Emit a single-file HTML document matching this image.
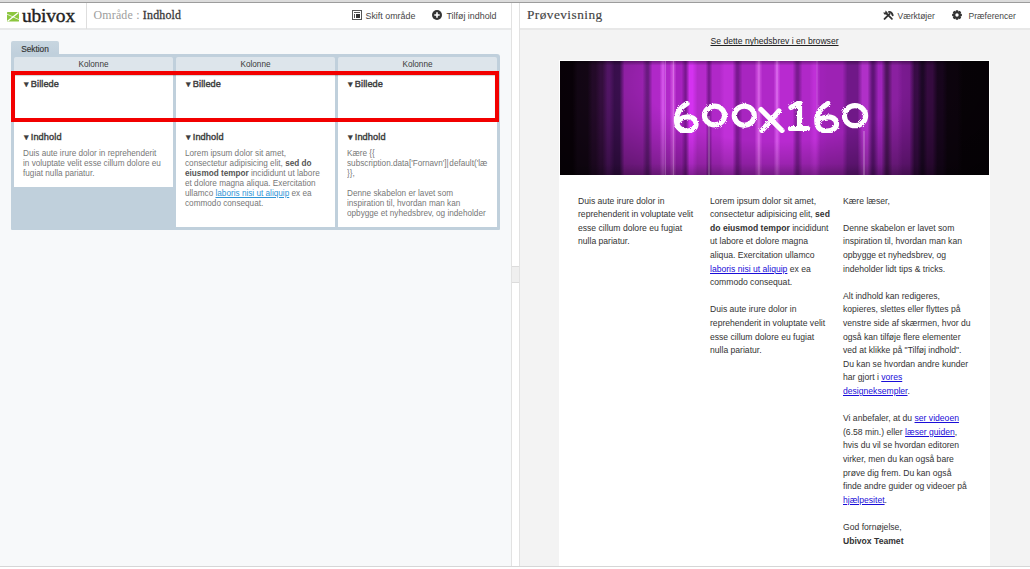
<!DOCTYPE html>
<html><head><meta charset="utf-8">
<style>
*{margin:0;padding:0;box-sizing:border-box}
html,body{width:1030px;height:569px;overflow:hidden;background:#fff;font-family:"Liberation Sans",sans-serif}
.abs{position:absolute}
.nw{white-space:nowrap}
#topline{left:0;top:0;width:1030px;height:3px;background:#dcdcdc;border-bottom:1px solid #9c9c9c}
#lhead{left:0;top:3px;width:511px;height:27px;background:#fff;border-bottom:2px solid #e8e9ea}
#lbody{left:0;top:30px;width:511px;height:536px;background:#f7f9fa}
#split{left:511px;top:3px;width:9px;height:563px;background:#fff;border-left:1px solid #e2e2e2;border-right:1px solid #e2e2e2}
#handle{left:512px;top:266px;width:7px;height:17px;background:#efefef;border-top:1px solid #dcdcdc;border-bottom:1px solid #dcdcdc}
#rhead{left:520px;top:3px;width:510px;height:27px;background:#fff;border-bottom:2px solid #e8e8e8}
#rbody{left:520px;top:30px;width:510px;height:536px;background:#f3f3f3}
#botline{left:0;top:566px;width:1030px;height:1px;background:#d6d6d6}
#botw{left:0;top:567px;width:1030px;height:2px;background:#fff}

.logo{left:22px;top:4px;font-family:"Liberation Serif",serif;font-size:19.5px;line-height:24px;color:#222;letter-spacing:-0.2px;-webkit-text-stroke:0.4px #222}
.vsep{left:86px;top:3px;width:1px;height:26px;background:#dedede}
.area{left:93.5px;top:8.3px;font-family:"Liberation Serif",serif;font-size:11.9px;letter-spacing:0.2px;line-height:14px;color:#9d9d9d}
.area b{color:#3a3a3a;font-weight:normal;-webkit-text-stroke:0.3px #3a3a3a}
.hbtn{font-size:8.7px;line-height:10px;color:#454545;top:10.6px}

#cont{left:11px;top:54px;width:489px;height:176px;background:#c0d0dc;border-radius:0 3px 1px 1px}
#tab{left:11px;top:41px;width:48px;height:13px;background:linear-gradient(#c8d6e0,#c0d0dc);border-radius:2px 2px 0 0;font-size:8.3px;text-align:center;line-height:16.2px;color:#333;-webkit-text-stroke:0.15px #333}
.colh{top:57px;height:14px;background:#dde5eb;font-size:8.2px;color:#3a3a3a;text-align:center;line-height:15px;border-radius:2px 2px 0 0}
.cell{background:#fff}
.ttl{font-size:9.2px;line-height:12px;font-weight:normal;color:#3c3c3c;-webkit-text-stroke:0.4px #3c3c3c;letter-spacing:0.1px}
.ptxt{font-size:8.2px;color:#777;line-height:10px;white-space:nowrap}
.ptxt b{color:#555}
#red{left:11px;top:71px;width:488px;height:51px;border:4px solid #f20000;box-shadow:inset 0 1px 1px rgba(0,0,0,0.18)}

.em{font-size:8.6px;color:#333;line-height:13.6px;white-space:nowrap}
.em a{color:#1a0dd8;text-decoration:underline}
</style></head><body>
<div id="topline" class="abs"></div>
<div id="lhead" class="abs"></div>
<div id="lbody" class="abs"></div>
<div id="split" class="abs"></div>
<div id="handle" class="abs"></div>
<div id="rhead" class="abs"></div>
<div id="rbody" class="abs"></div>
<div id="botline" class="abs"></div>
<div id="botw" class="abs"></div>

<svg class="abs" style="left:7px;top:12px" width="12" height="10" viewBox="0 0 12 10"><rect x="0" y="0" width="12" height="9.5" rx="0.6" fill="#8cc63f"/><path d="M0 2.2 L12 7.6" stroke="#fff" stroke-width="0.75"/><path d="M0.6 9.2 L11.4 0.6" stroke="#fff" stroke-width="1.25"/></svg>
<div class="abs logo">ubivox</div>
<div class="abs vsep"></div>
<div class="abs area nw">Område : <b>Indhold</b></div>
<svg class="abs" style="left:352px;top:10px" width="10" height="10" viewBox="0 0 10 10"><rect x="0.5" y="0.5" width="9" height="9" fill="none" stroke="#555" stroke-width="1"/><rect x="2" y="2" width="6" height="1" fill="#555"/><rect x="2" y="4" width="1" height="4" fill="#555"/><rect x="4" y="4" width="4" height="4" fill="#333"/></svg>
<div class="abs hbtn nw" style="left:365.5px;font-size:8.9px">Skift område</div>
<svg class="abs" style="left:432px;top:10px" width="10" height="10" viewBox="0 0 10 10"><circle cx="5" cy="5" r="5" fill="#333"/><path d="M5 2.3V7.7M2.3 5H7.7" stroke="#fff" stroke-width="1.6"/></svg>
<div class="abs hbtn nw" style="left:446.5px;font-size:8.9px">Tilføj indhold</div>

<div id="tab" class="abs">Sektion</div>
<div id="cont" class="abs"></div>
<div class="abs colh" style="left:14px;width:159px">Kolonne</div>
<div class="abs colh" style="left:176px;width:159px">Kolonne</div>
<div class="abs colh" style="left:338px;width:159px">Kolonne</div>
<div class="abs cell" style="left:14px;top:71px;width:159px;height:51px"></div>
<div class="abs cell" style="left:176px;top:71px;width:159px;height:51px"></div>
<div class="abs cell" style="left:338px;top:71px;width:159px;height:51px"></div>
<div class="abs cell" style="left:14px;top:122px;width:159px;height:65px"></div>
<div class="abs cell" style="left:176px;top:122px;width:159px;height:105px"></div>
<div class="abs cell" style="left:338px;top:122px;width:159px;height:105px"></div>
<div id="red" class="abs"></div>

<div class="abs ttl" style="left:23px;top:78px"><span style="position:relative;left:1px">▾</span> Billede</div>
<div class="abs ttl" style="left:185px;top:78px"><span style="position:relative;left:1px">▾</span> Billede</div>
<div class="abs ttl" style="left:347px;top:78px"><span style="position:relative;left:1px">▾</span> Billede</div>
<div class="abs ttl" style="left:23px;top:130.5px"><span style="position:relative;left:1px">▾</span> Indhold</div>
<div class="abs ttl" style="left:185px;top:130.5px"><span style="position:relative;left:1px">▾</span> Indhold</div>
<div class="abs ttl" style="left:347px;top:130.5px"><span style="position:relative;left:1px">▾</span> Indhold</div>

<div class="abs ptxt" style="left:23px;top:148.5px">Duis aute irure dolor in reprehenderit<br>in voluptate velit esse cillum dolore eu<br>fugiat nulla pariatur.</div>
<div class="abs ptxt" style="left:185px;top:149px">Lorem ipsum dolor sit amet,<br>consectetur adipisicing elit, <b>sed do</b><br><b>eiusmod tempor</b> incididunt ut labore<br>et dolore magna aliqua. Exercitation<br>ullamco <a style="color:#2f95d6;text-decoration:underline">laboris nisi ut aliquip</a> ex ea<br>commodo consequat.</div>
<div class="abs ptxt" style="left:347px;top:149px;width:146px;height:75px;overflow:hidden">Kære {{<br>subscription.data['Fornavn']<span style="letter-spacing:0.6px">|</span>default('læ<br>}},<br><br>Denne skabelon er lavet som<br>inspiration til, hvordan man kan<br>opbygge et nyhedsbrev, og indeholder</div>

<div class="abs nw" style="left:527px;top:6.7px;font-family:'Liberation Serif',serif;font-size:13.3px;letter-spacing:0.45px;line-height:16px;color:#444;-webkit-text-stroke:0.15px #444">Prøvevisning</div>
<svg class="abs" style="left:883px;top:10px" width="11" height="10" viewBox="0 0 11 10"><path d="M1.6 8.9 L6.6 3.9" stroke="#333" stroke-width="1.9" stroke-linecap="round"/><path d="M6 1.9 Q8.7 1.7 9.7 5.3" fill="none" stroke="#333" stroke-width="1.9" stroke-linecap="round"/><path d="M8.9 8.9 L3.6 3.6" stroke="#333" stroke-width="1.7" stroke-linecap="round"/><path d="M0.2 2.4 L2.2 2.6 L2.6 0.4 L4.6 2.4 L4.4 4.6 L1.4 4.6 Z" fill="#333"/></svg>
<div class="abs hbtn nw" style="left:897.5px;font-size:8.5px">Værktøjer</div>
<svg class="abs" style="left:952px;top:10px" width="10" height="10" viewBox="0 0 10 10"><path d="M8.52 3.58 L9.87 3.88 L9.87 6.12 L8.52 6.42 L8.50 6.48 L9.24 7.65 L7.65 9.24 L6.48 8.50 L6.42 8.52 L6.12 9.87 L3.88 9.87 L3.58 8.52 L3.52 8.50 L2.35 9.24 L0.76 7.65 L1.50 6.48 L1.48 6.42 L0.13 6.12 L0.13 3.88 L1.48 3.58 L1.50 3.52 L0.76 2.35 L2.35 0.76 L3.52 1.50 L3.58 1.48 L3.88 0.13 L6.12 0.13 L6.42 1.48 L6.48 1.50 L7.65 0.76 L9.24 2.35 L8.50 3.52Z M6.7 5A1.7 1.7 0 1 0 3.3 5A1.7 1.7 0 1 0 6.7 5Z" fill="#333" fill-rule="evenodd"/></svg>
<div class="abs hbtn nw" style="left:968.5px;font-size:8.5px">Præferencer</div>

<div class="abs nw" style="left:710.5px;top:36.3px;font-size:8.6px;line-height:10px;color:#222;text-decoration:underline">Se dette nyhedsbrev i en browser</div>
<div class="abs" style="left:559px;top:60px;width:431px;height:506px;background:#fff"></div>
<svg class="abs" style="left:560px;top:61px" width="429" height="114" viewBox="0 0 429 114">
<defs><linearGradient id="bg" x1="0" x2="1" y1="0" y2="0"><stop offset="0.58%" stop-color="#0b010a"/><stop offset="2.91%" stop-color="#0b010a"/><stop offset="4.08%" stop-color="#170819"/><stop offset="6.41%" stop-color="#170819"/><stop offset="7.58%" stop-color="#2a0c30"/><stop offset="8.28%" stop-color="#2a0c30"/><stop offset="9.43%" stop-color="#3c1047"/><stop offset="9.92%" stop-color="#3c1047"/><stop offset="11.06%" stop-color="#5c1872"/><stop offset="11.55%" stop-color="#5c1872"/><stop offset="12.70%" stop-color="#3e1054"/><stop offset="13.87%" stop-color="#3e1054"/><stop offset="15.03%" stop-color="#9a22b0"/><stop offset="19.23%" stop-color="#9a22b0"/><stop offset="20.22%" stop-color="#6a1a80"/><stop offset="20.57%" stop-color="#6a1a80"/><stop offset="21.56%" stop-color="#b028c8"/><stop offset="23.19%" stop-color="#b028c8"/><stop offset="23.94%" stop-color="#d455ea"/><stop offset="24.08%" stop-color="#d455ea"/><stop offset="24.83%" stop-color="#b028c8"/><stop offset="25.52%" stop-color="#b028c8"/><stop offset="26.27%" stop-color="#d050e0"/><stop offset="26.41%" stop-color="#d050e0"/><stop offset="27.16%" stop-color="#a822c0"/><stop offset="28.32%" stop-color="#a822c0"/><stop offset="29.15%" stop-color="#7a1890"/><stop offset="29.36%" stop-color="#7a1890"/><stop offset="30.19%" stop-color="#d432f0"/><stop offset="30.89%" stop-color="#d432f0"/><stop offset="32.05%" stop-color="#b52acb"/><stop offset="33.92%" stop-color="#b52acb"/><stop offset="34.66%" stop-color="#7a1890"/><stop offset="34.80%" stop-color="#7a1890"/><stop offset="35.55%" stop-color="#b028c8"/><stop offset="37.18%" stop-color="#b028c8"/><stop offset="38.34%" stop-color="#c030d8"/><stop offset="40.21%" stop-color="#c030d8"/><stop offset="41.20%" stop-color="#7a1890"/><stop offset="41.55%" stop-color="#7a1890"/><stop offset="42.54%" stop-color="#a825c0"/><stop offset="45.34%" stop-color="#a825c0"/><stop offset="46.17%" stop-color="#d050e0"/><stop offset="46.38%" stop-color="#d050e0"/><stop offset="47.20%" stop-color="#b028c8"/><stop offset="49.77%" stop-color="#b028c8"/><stop offset="50.51%" stop-color="#d455e8"/><stop offset="50.65%" stop-color="#d455e8"/><stop offset="51.40%" stop-color="#b82ad0"/><stop offset="54.20%" stop-color="#b82ad0"/><stop offset="55.19%" stop-color="#7a1a90"/><stop offset="55.54%" stop-color="#7a1a90"/><stop offset="56.53%" stop-color="#b028c8"/><stop offset="58.16%" stop-color="#b028c8"/><stop offset="59.23%" stop-color="#c030d8"/><stop offset="59.65%" stop-color="#c030d8"/><stop offset="60.71%" stop-color="#a022b8"/><stop offset="61.20%" stop-color="#a022b8"/><stop offset="62.35%" stop-color="#9d22b4"/><stop offset="65.85%" stop-color="#9d22b4"/><stop offset="67.02%" stop-color="#701888"/><stop offset="69.35%" stop-color="#701888"/><stop offset="70.51%" stop-color="#b030c8"/><stop offset="71.68%" stop-color="#b030c8"/><stop offset="72.75%" stop-color="#601478"/><stop offset="73.17%" stop-color="#601478"/><stop offset="74.24%" stop-color="#a024bc"/><stop offset="74.94%" stop-color="#a024bc"/><stop offset="76.01%" stop-color="#50145e"/><stop offset="76.43%" stop-color="#50145e"/><stop offset="77.51%" stop-color="#8a20a0"/><stop offset="78.67%" stop-color="#8a20a0"/><stop offset="79.84%" stop-color="#7a1a90"/><stop offset="81.47%" stop-color="#7a1a90"/><stop offset="82.63%" stop-color="#3a0c48"/><stop offset="83.33%" stop-color="#3a0c48"/><stop offset="84.32%" stop-color="#1e0828"/><stop offset="84.67%" stop-color="#1e0828"/><stop offset="85.66%" stop-color="#3a0c45"/><stop offset="86.83%" stop-color="#3a0c45"/><stop offset="88.00%" stop-color="#1a0620"/><stop offset="89.16%" stop-color="#1a0620"/><stop offset="90.33%" stop-color="#0e040f"/><stop offset="92.66%" stop-color="#0e040f"/><stop offset="93.82%" stop-color="#080208"/><stop offset="99.42%" stop-color="#080208"/></linearGradient>
<linearGradient id="vs" x1="0" x2="0" y1="0" y2="1"><stop offset="0" stop-color="#000" stop-opacity="0.35"/><stop offset="0.04" stop-color="#000" stop-opacity="0"/><stop offset="0.9" stop-color="#000" stop-opacity="0"/><stop offset="1" stop-color="#000" stop-opacity="0.15"/></linearGradient></defs>
<rect x="0" y="0" width="429" height="114" fill="url(#bg)"/>
<radialGradient id="vig" gradientUnits="userSpaceOnUse" cx="215" cy="20" r="320" gradientTransform="translate(215 20) scale(1 0.47) translate(-215 -20)"><stop offset="0.4" stop-color="#000" stop-opacity="0"/><stop offset="1" stop-color="#000" stop-opacity="0.6"/></radialGradient><rect x="0" y="0" width="429" height="114" fill="url(#vig)"/><rect x="0" y="0" width="429" height="114" fill="url(#vs)"/>
<g stroke="#fff" stroke-width="0.6" opacity="0.3"><path d="M105.5 0V114M113.5 0V114M199 0V114M217 0V60M257 0V60"/></g><g stroke="#fff" stroke-width="0.7" opacity="0.6"><path d="M149 55V114M304 70V114"/></g>
<filter id="rough" x="-5%" y="-5%" width="110%" height="110%"><feTurbulence type="fractalNoise" baseFrequency="1.4" numOctaves="2" seed="5"/><feDisplacementMap in="SourceGraphic" scale="3"/></filter><g fill="none" stroke="#fff" stroke-width="5.2" stroke-linecap="round" stroke-linejoin="round" transform="translate(-560,-61)" filter="url(#rough)">
<path d="M687 103.5 C681 107 676 113 676.5 121 C677 129 682 131 687 131 C693 131 696.5 127.5 696 123 C695.5 118.5 691 116.5 686.5 117 C682 117.5 678.5 120 677 123"/>
<ellipse cx="714.5" cy="115.5" rx="10" ry="9.4"/>
<ellipse cx="744.3" cy="115.7" rx="10" ry="9.6"/>
<path d="M761 109.5 L782 130.5 M779 111 L762 130.5"/>
<path d="M791 107.5 L799.5 102.5 L799.5 128.5 M790.5 128.5 L807.5 128.5"/>
<path d="M828 103.5 C822 107 816.5 113 816.8 121 C817 129 822 131 827 131 C833 131 837 127.5 836.5 123 C836 118.5 831.5 116.5 827 117 C822.5 117.5 819 120 817.5 123"/>
<ellipse cx="855" cy="115.7" rx="10.6" ry="10"/>
</g>
</svg>

<div class="abs em" style="left:578px;top:194.7px">Duis aute irure dolor in<br>reprehenderit in voluptate velit<br>esse cillum dolore eu fugiat<br>nulla pariatur.</div>
<div class="abs em" style="left:710px;top:194.7px">Lorem ipsum dolor sit amet,<br>consectetur adipisicing elit, <b>sed</b><br><b>do eiusmod tempor</b> incididunt<br>ut labore et dolore magna<br>aliqua. Exercitation ullamco<br><a>laboris nisi ut aliquip</a> ex ea<br>commodo consequat.<br><br>Duis aute irure dolor in<br>reprehenderit in voluptate velit<br>esse cillum dolore eu fugiat<br>nulla pariatur.</div>
<div class="abs em" style="left:843px;top:194.7px">Kære læser,<br><br>Denne skabelon er lavet som<br>inspiration til, hvordan man kan<br>opbygge et nyhedsbrev, og<br>indeholder lidt tips &amp; tricks.<br><br>Alt indhold kan redigeres,<br>kopieres, slettes eller flyttes på<br>venstre side af skærmen, hvor du<br>også kan tilføje flere elementer<br>ved at klikke på "Tilføj indhold".<br>Du kan se hvordan andre kunder<br>har gjort i <a>vores</a><br><a>designeksempler</a>.<br><br>Vi anbefaler, at du <a>ser videoen</a><br>(6.58 min.) eller <a>læser guiden</a>,<br>hvis du vil se hvordan editoren<br>virker, men du kan også bare<br>prøve dig frem. Du kan også<br>finde andre guider og videoer på<br><a>hjælpesitet</a>.<br><br>God fornøjelse,<br><b>Ubivox Teamet</b></div>
</body></html>
